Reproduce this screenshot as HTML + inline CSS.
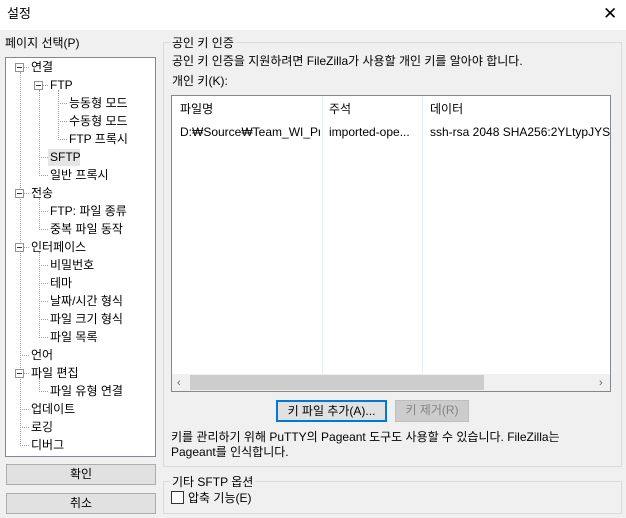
<!DOCTYPE html>
<html><head><meta charset="utf-8"><style>
*{margin:0;padding:0;box-sizing:border-box}
body{width:626px;height:518px;background:#f0f0f0;font-family:"Liberation Sans","Noto Sans CJK KR",sans-serif;font-size:12px;color:#000;position:relative;overflow:hidden}
.a{position:absolute;white-space:nowrap;line-height:14px}
.title{position:absolute;left:0;top:0;width:626px;height:30px;background:#fff}
.tree{position:absolute;left:5px;top:57px;width:151px;height:400px;background:#fff;border:1px solid #828790}
.btn{position:absolute;background:#e1e1e1;border:1px solid #adadad;text-align:center;line-height:18px}
.grp{position:absolute;border:1px solid #dcdcdc}
.lab{position:absolute;background:#f0f0f0;padding:0 2px;line-height:14px}
.vl{position:absolute;border-left:1px dotted #a0a0a0;width:0}
.hl{position:absolute;border-top:1px dotted #a0a0a0;height:0}
.box{position:absolute;width:9px;height:9px;border:1px solid #919191;background:#fff}
.box:after{content:"";position:absolute;left:1px;top:3px;width:5px;height:1px;background:#333}
</style></head><body>
<div class="title"></div>
<div class="a" style="left:7px;top:7px;font-size:13px">설정</div>
<div class="a" style="left:603px;top:4px;font-size:17px;line-height:20px">✕</div>
<div class="a" style="left:5px;top:36px">페이지 선택(P)</div>
<div class="tree">
<div class="vl" style="left:14px;top:14px;height:374px"></div>
<div class="vl" style="left:33px;top:32px;height:86px"></div>
<div class="vl" style="left:52px;top:32px;height:50px"></div>
<div class="vl" style="left:33px;top:140px;height:32px"></div>
<div class="vl" style="left:33px;top:194px;height:86px"></div>
<div class="vl" style="left:33px;top:320px;height:14px"></div>
</div>
<div id="t"></div>
<script>
var items=[[0,"연결",1],[1,"FTP",1],[2,"능동형 모드"],[2,"수동형 모드"],[2,"FTP 프록시"],[1,"SFTP"],[1,"일반 프록시"],[0,"전송",1],[1,"FTP: 파일 종류"],[1,"중복 파일 동작"],[0,"인터페이스",1],[1,"비밀번호"],[1,"테마"],[1,"날짜/시간 형식"],[1,"파일 크기 형식"],[1,"파일 목록"],[0,"언어"],[0,"파일 편집",1],[1,"파일 유형 연결"],[0,"업데이트"],[0,"로깅"],[0,"디버그"]];
var h="";
items.forEach(function(it,i){var y=60+i*18;var lx=20+it[0]*19;var tx=31+it[0]*19;
h+='<div class="hl" style="left:'+lx+'px;top:'+(y+7)+'px;width:'+(tx-lx-2)+'px"></div>';
if(it[2])h+='<div class="box" style="left:'+(lx-5)+'px;top:'+(y+3)+'px"></div>';
if(it[1]=="SFTP")h+='<div style="position:absolute;left:'+(tx-2)+'px;top:'+(y-1)+'px;width:32px;height:17px;background:#e5e5e5"></div>';
h+='<div class="a" style="left:'+tx+'px;top:'+y+'px">'+it[1]+'</div>';});
document.getElementById("t").innerHTML=h;
</script>
<div class="btn" style="left:6px;top:464px;width:150px;height:21px">확인</div>
<div class="btn" style="left:6px;top:493px;width:150px;height:21px">취소</div>

<div class="grp" style="left:163px;top:42px;width:459px;height:425px"></div>
<div class="lab" style="left:170px;top:36px">공인 키 인증</div>
<div class="a" style="left:172px;top:54px">공인 키 인증을 지원하려면 FileZilla가 사용할 개인 키를 알아야 합니다.</div>
<div class="a" style="left:172px;top:74px">개인 키(K):</div>
<div style="position:absolute;left:171px;top:95px;width:440px;height:297px;background:#fff;border:1px solid #828790">
<div style="position:absolute;left:150px;top:0;width:1px;height:278px;background:#e5eff8"></div>
<div style="position:absolute;left:250px;top:0;width:1px;height:278px;background:#e5eff8"></div>
<div class="a" style="left:8px;top:6px">파일명</div>
<div class="a" style="left:157px;top:6px">주석</div>
<div class="a" style="left:258px;top:6px">데이터</div>
<div class="a" style="left:8px;top:29px;width:140px;overflow:hidden">D:₩Source₩Team_WI_Pr...</div>
<div class="a" style="left:157px;top:29px">imported-ope...</div>
<div class="a" style="left:258px;top:29px;width:180px;overflow:hidden">ssh-rsa 2048 SHA256:2YLtypJYSjp</div>
<div style="position:absolute;left:0;top:278px;width:438px;height:17px;background:#f0f0f0"></div>
<div style="position:absolute;left:18px;top:279px;width:294px;height:15px;background:#cdcdcd"></div>
<div class="a" style="left:5px;top:280px;color:#606060;font-size:11px">‹</div>
<div class="a" style="left:427px;top:280px;color:#606060;font-size:11px">›</div>
</div>
<div class="btn" style="left:276px;top:400px;width:111px;height:22px;border:2px solid #0078d7;line-height:18px">키 파일 추가(A)...</div>
<div class="btn" style="left:395px;top:400px;width:74px;height:22px;background:#cccccc;border-color:#bfbfbf;color:#838383">키 제거(R)</div>
<div class="a" style="left:171px;top:430px">키를 관리하기 위해 PuTTY의 Pageant 도구도 사용할 수 있습니다. FileZilla는</div>
<div class="a" style="left:171px;top:445px">Pageant를 인식합니다.</div>

<div class="grp" style="left:163px;top:481px;width:459px;height:33px"></div>
<div class="lab" style="left:170px;top:475px">기타 SFTP 옵션</div>
<div style="position:absolute;left:171px;top:491px;width:13px;height:13px;border:1px solid #333;background:#fff"></div>
<div class="a" style="left:188px;top:491px">압축 기능(E)</div>
</body></html>
